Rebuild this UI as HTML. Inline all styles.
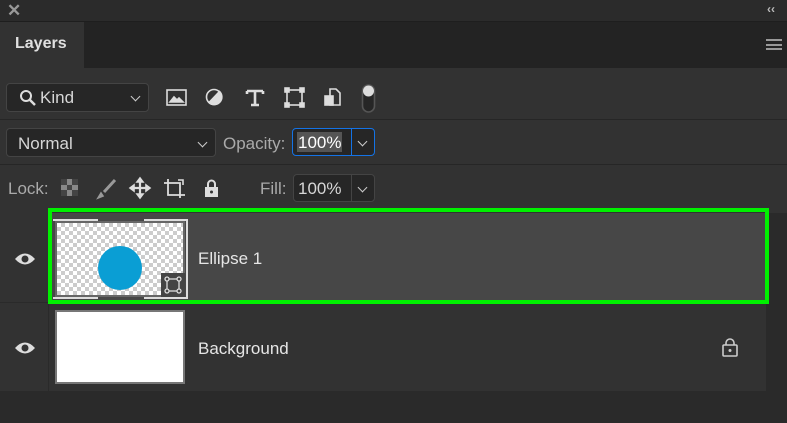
<!DOCTYPE html><html><head><style>
*{margin:0;padding:0;box-sizing:border-box}
body{width:787px;height:423px;background:#2a2a2a;font-family:"Liberation Sans",sans-serif;color:#d6d6d6;position:relative;overflow:hidden}
.a{position:absolute}
.box{position:absolute;background:#262626;border:1px solid #444;border-radius:4px}
.t{position:absolute;font-size:16px;white-space:nowrap}
.chev{position:absolute;width:7px;height:7px;border-right:1.5px solid #ccc;border-bottom:1.5px solid #ccc;transform:rotate(45deg)}
.chk{background-color:#fff;background-image:linear-gradient(45deg,#ccc 25%,transparent 25%,transparent 75%,#ccc 75%),linear-gradient(45deg,#ccc 25%,transparent 25%,transparent 75%,#ccc 75%);background-size:8px 8px;background-position:0 0,4px 4px}
</style></head><body>
<div class="a" style="left:0;top:0;width:787px;height:22px;background:#2b2b2b;border-bottom:1px solid #1e1e1e"></div>
<div class="t" style="left:7px;top:1px;font-size:17px;color:#999;font-weight:bold">✕</div>
<div class="t" style="left:767px;top:2px;font-size:12px;color:#bbb;font-weight:bold">‹‹</div>
<div class="a" style="left:0;top:22px;width:787px;height:46px;background:#232323"></div>
<div class="a" style="left:0;top:22px;width:84px;height:46px;background:#323232"></div>
<div class="t" style="left:15px;top:35px;font-size:16px;font-weight:bold;color:#e0e0e0">Layers</div>
<div class="a" style="left:766px;top:39px;width:16px;height:11px;border-top:2px solid #999;border-bottom:2px solid #999"></div>
<div class="a" style="left:766px;top:43.5px;width:16px;height:2px;background:#999"></div>
<div class="a" style="left:0;top:68px;width:787px;height:145px;background:#323232"></div>
<div class="a" style="left:0;top:119px;width:787px;height:1px;background:#262626"></div>
<div class="a" style="left:0;top:164px;width:787px;height:1px;background:#262626"></div>
<div class="box" style="left:6px;top:83px;width:143px;height:29px"></div>
<svg class="a" style="left:19px;top:89px" width="18" height="18"><circle cx="7" cy="7" r="5" fill="none" stroke="#ddd" stroke-width="2"/><path d="M11 11l5 5" stroke="#ddd" stroke-width="2.5"/></svg>
<div class="t" style="left:40px;top:88px;font-size:17px">Kind</div>
<div class="chev" style="left:132px;top:93px"></div>
<svg class="a" style="left:165px;top:84px" width="215" height="30" fill="none" stroke="#ddd" stroke-width="1.6">
<g transform="translate(0,3)">
<rect x="2" y="3" width="19" height="15"/><path d="M5 15l4-5 3 3 2-2 4 4z" fill="#ddd"/>
<circle cx="49" cy="10" r="7.5"/><path d="M44 15.5L54.5 4.5A7.5 7.5 0 0 1 44 15.5z" fill="#ddd"/>
<path d="M82 4h16M90 4v14M86 18h8M82 4v3M98 4v3" stroke-width="2.6"/>
<rect x="122" y="3" width="15" height="15"/><g fill="#ddd"><rect x="120" y="1" width="4" height="4"/><rect x="135" y="1" width="4" height="4"/><rect x="120" y="16" width="4" height="4"/><rect x="135" y="16" width="4" height="4"/></g>
<path d="M165 2h6l4 4v12h-10z"/><rect x="160" y="9" width="8" height="9" fill="#ddd"/>
</g>
<rect x="197.5" y="1" width="12" height="27" rx="6" stroke="#555" fill="#262626"/><circle cx="203.5" cy="7" r="5.5" fill="#ddd" stroke="none"/>
</svg>
<div class="box" style="left:6px;top:128px;width:210px;height:29px"></div>
<div class="t" style="left:18px;top:134px;font-size:17px">Normal</div>
<div class="chev" style="left:199px;top:139px"></div>
<div class="t" style="left:223px;top:134px;font-size:17px;color:#aaa">Opacity:</div>
<div class="a" style="left:292px;top:128px;width:83px;height:28px;border:1.5px solid #1473e6;border-radius:4px;background:#262626"></div>
<div class="a" style="left:351px;top:129px;width:1px;height:26px;background:#1473e6"></div>
<div class="a" style="left:297px;top:132px;width:45px;height:20px;background:#555"></div>
<div class="t" style="left:298px;top:133px;font-size:17px;color:#fff">100%</div>
<div class="chev" style="left:359px;top:138px"></div>
<div class="t" style="left:8px;top:179px;font-size:17px;color:#aaa">Lock:</div>
<svg class="a" style="left:60px;top:176px" width="165" height="24" fill="none" stroke="#ddd" stroke-width="1.6">
<rect x="1" y="3" width="17" height="17" fill="#888" stroke="none"/><g fill="#444" stroke="none"><rect x="1" y="3" width="6" height="6"/><rect x="12" y="3" width="6" height="6"/><rect x="7" y="9" width="5" height="5"/><rect x="1" y="14" width="6" height="6"/><rect x="12" y="14" width="6" height="6"/></g>
<path d="M55 4L44 16" stroke="#999" stroke-width="3"/><path d="M41 17l-3 5 5-2z" fill="#999" stroke="#999"/>
<path d="M80 4v17M72 12h17" stroke-width="2.2"/><path d="M77 6l3-4 3 4zM77 18l3 4 3-4zM74 9l-4 3 4 3zM86 9l4 3-4 3z" fill="#ddd"/>
<path d="M108 3v16h17M104 7h16v15" stroke-width="1.8"/><path d="M118 4l5 0 0 5" />
<rect x="145" y="11" width="13" height="10" fill="#ddd" stroke="none"/><path d="M148 11v-3a3.5 3.5 0 0 1 7 0v3" stroke-width="2"/><circle cx="151.5" cy="16" r="1.5" fill="#333" stroke="none"/>
</svg>
<div class="t" style="left:260px;top:179px;font-size:17px;color:#aaa">Fill:</div>
<div class="box" style="left:293px;top:174px;width:82px;height:28px"></div>
<div class="a" style="left:351px;top:175px;width:1px;height:26px;background:#444"></div>
<div class="t" style="left:298px;top:179px;font-size:17px">100%</div>
<div class="chev" style="left:359px;top:184px"></div>
<div class="a" style="left:0;top:213px;width:766px;height:90px;background:#474747"></div>
<div class="a" style="left:0;top:213px;width:48px;height:90px;background:#323232"></div>
<div class="a" style="left:0;top:303px;width:766px;height:88px;background:#323232"></div>
<div class="a" style="left:48px;top:303px;width:1px;height:88px;background:#2a2a2a"></div>
<div class="a" style="left:0;top:302px;width:766px;height:1px;background:#2a2a2a"></div>
<svg class="a" style="left:14px;top:251px" width="22" height="16"><path d="M1 8Q11-3 21 8Q11 19 1 8z" fill="#ddd"/><circle cx="11" cy="8" r="3.5" fill="#323232"/></svg>
<svg class="a" style="left:14px;top:340px" width="22" height="16"><path d="M1 8Q11-3 21 8Q11 19 1 8z" fill="#ddd"/><circle cx="11" cy="8" r="3.5" fill="#323232"/></svg>
<div class="a chk" style="left:55px;top:221px;width:130px;height:76px;border:2px solid #666"></div>
<div class="a" style="left:53px;top:219px;width:45px;height:2px;background:#ddd"></div>
<div class="a" style="left:144px;top:219px;width:44px;height:2px;background:#ddd"></div>
<div class="a" style="left:53px;top:297px;width:45px;height:2px;background:#ddd"></div>
<div class="a" style="left:144px;top:297px;width:44px;height:2px;background:#ddd"></div>
<div class="a" style="left:186px;top:219px;width:2px;height:80px;background:#ddd"></div>
<div class="a" style="left:98px;top:246px;width:44px;height:44px;border-radius:50%;background:#0a9ed4"></div>
<div class="a" style="left:161px;top:273px;width:24px;height:24px;background:#444"></div>
<svg class="a" style="left:164px;top:276px" width="19" height="19" fill="none" stroke="#ddd" stroke-width="1.3"><rect x="3" y="3" width="12" height="12"/><g fill="#444"><circle cx="3" cy="3" r="2"/><circle cx="15" cy="3" r="2"/><circle cx="3" cy="15" r="2"/><circle cx="15" cy="15" r="2"/></g></svg>
<div class="a" style="left:48px;top:208px;width:721px;height:96px;border:4px solid #00f000"></div>
<div class="t" style="left:198px;top:249px;font-size:17px;color:#e6e6e6">Ellipse 1</div>
<div class="a" style="left:55px;top:310px;width:130px;height:74px;background:#fff;border:2px solid #777"></div>
<div class="t" style="left:198px;top:339px;font-size:17px;color:#e6e6e6">Background</div>
<svg class="a" style="left:721px;top:337px" width="18" height="20" fill="none" stroke="#ccc" stroke-width="1.6"><rect x="2" y="8" width="14" height="11" rx="1"/><path d="M5 8v-2a4 4 0 0 1 8 0v2"/><circle cx="9" cy="13.5" r="1.5" fill="#ccc" stroke="none"/></svg>
</body></html>
